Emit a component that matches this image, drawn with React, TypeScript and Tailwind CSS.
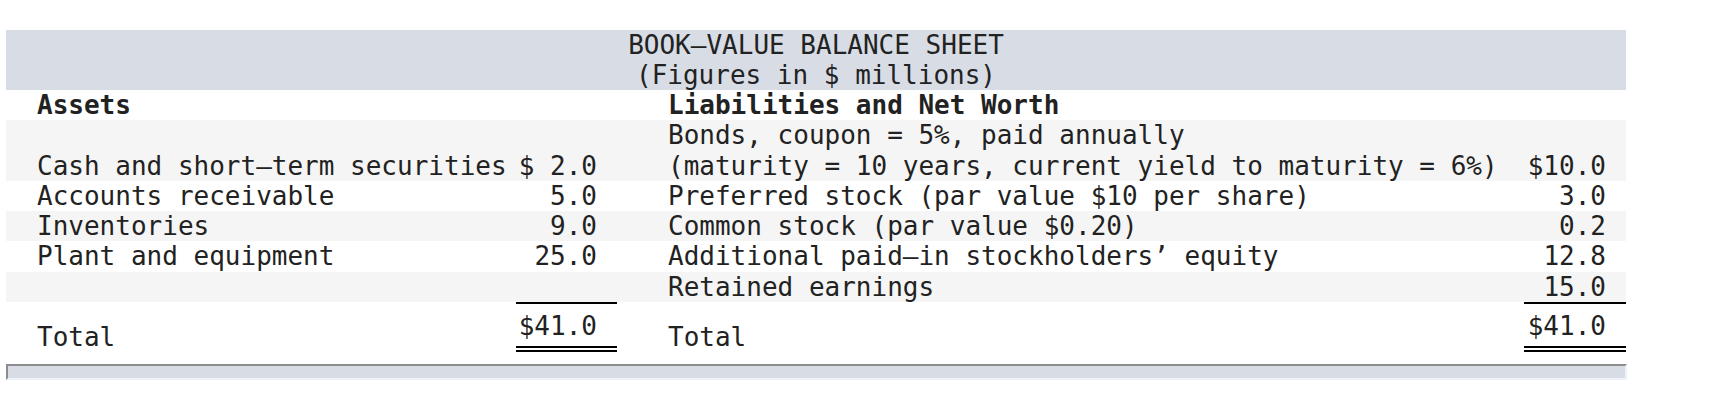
const rows = [
  { left: "Accounts receivable", leftValue: "5.0", right: "Preferred stock (par value $10 per share)", rightValue: "3.0", shaded: false },
  { left: "Inventories", leftValue: "9.0", right: "Common stock (par value $0.20)", rightValue: "0.2", shaded: true },
  { left: "Plant and equipment", leftValue: "25.0", right: "Additional paid–in stockholders’ equity", rightValue: "12.8", shaded: false },
  { left: "", leftValue: "", right: "Retained earnings", rightValue: "15.0", shaded: true },
];

const cols = "grid grid-cols-[510px_101px_907px_102px]";

function TotalValue({ value }: { value: string }) {
  return (
    <div className="self-start border-t-2 border-black pt-[7px]">
      <div className="pr-[20px] text-right">{value}</div>
      <div className="mt-[5px] h-[6px] border-y-2 border-black" />
    </div>
  );
}

export default function App() {
  return (
    <div
      className="min-h-[412px] bg-white pt-[30px] pl-[6px] text-[26px] leading-[30.3px] text-[#222]"
      style={{ fontFamily: '"DejaVu Sans Mono", "Liberation Mono", monospace' }}
    >
      <div className="w-[1620px]">
        <div className="h-[60px] bg-[#d8dce5] text-center leading-[30px]">
          <div>BOOK–VALUE BALANCE SHEET</div>
          <div>(Figures in $ millions)</div>
        </div>

        <div className={`${cols} font-bold`}>
          <div className="pl-[31px]">Assets</div>
          <div />
          <div className="pl-[51px]">Liabilities and Net Worth</div>
          <div />
        </div>

        <div className={`${cols} items-end bg-[#f5f5f5]`}>
          <div className="pl-[31px]">Cash and short–term securities</div>
          <div className="pr-[20px] text-right">$ 2.0</div>
          <div className="pl-[51px]">
            <div>Bonds, coupon = 5%, paid annually</div>
            <div>(maturity = 10 years, current yield to maturity = 6%)</div>
          </div>
          <div className="pr-[20px] text-right">$10.0</div>
        </div>

        {rows.map((row) => (
          <div key={row.right} className={`${cols} ${row.shaded ? "bg-[#f5f5f5]" : ""}`}>
            <div className="pl-[31px]">{row.left}</div>
            <div className="pr-[20px] text-right">{row.leftValue}</div>
            <div className="pl-[51px]">{row.right}</div>
            <div className="pr-[20px] text-right">{row.rightValue}</div>
          </div>
        ))}

        <div className={`${cols} h-[50px]`}>
          <div className="self-end pl-[31px]">Total</div>
          <TotalValue value="$41.0" />
          <div className="self-end pl-[51px]">Total</div>
          <TotalValue value="$41.0" />
        </div>
      </div>

      <div className="mt-[12px] h-[16px] w-[1621px] border-2 border-t-[#8c8c8c] border-r-[#eef0fa] border-b-[#eef0fa] border-l-[#8c8c8c] bg-[#d8dce5]" />
    </div>
  );
}
